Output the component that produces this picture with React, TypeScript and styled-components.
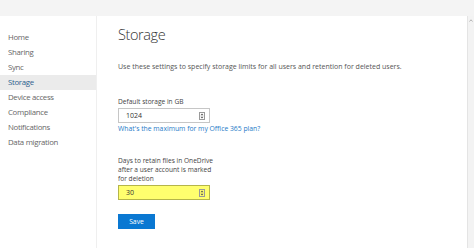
import styled, { createGlobalStyle } from 'styled-components';

const GlobalStyle = createGlobalStyle`
  html, body {
    margin: 0;
    padding: 0;
    background: #ffffff;
  }
  body {
    font-family: "Open Sans", "Noto Sans", sans-serif;
    color: #333333;
  }
`;

const navItems = [
  'Home',
  'Sharing',
  'Sync',
  'Storage',
  'Device access',
  'Compliance',
  'Notifications',
  'Data migration',
];

const Page = styled.div`
  width: 474px;
  height: 248px;
  display: flex;
  flex-direction: column;
  overflow: hidden;
`;

const TopBar = styled.div`
  height: 16px;
  flex: none;
  background: #f4f4f4;
`;

const Body = styled.div`
  flex: 1;
  display: flex;
`;

const Nav = styled.nav`
  width: 96px;
  flex: none;
  border-right: 1px solid #efefef;
  padding-top: 14px;
  display: flex;
  flex-direction: column;
`;

const NavItem = styled.div<{ $active?: boolean }>`
  height: 15px;
  line-height: 15px;
  padding-left: 8px;
  font-size: 7.8px;
  letter-spacing: -0.3px;
  color: ${(p) => (p.$active ? '#2b5f8e' : '#666666')};
  background: ${(p) => (p.$active ? '#ebebeb' : 'transparent')};
`;

const Main = styled.main`
  flex: 1;
  padding: 9px 0 0 21px;
  display: flex;
  flex-direction: column;
  align-items: flex-start;
`;

const Title = styled.h1`
  margin: 0;
  font-size: 14.5px;
  font-weight: 300;
  letter-spacing: -0.4px;
  color: #333333;
  line-height: 20px;
`;

const Description = styled.p`
  margin: 17px 0 0;
  font-size: 7px;
  line-height: 10px;
  color: #555555;
`;

const Field = styled.div<{ $gap: number }>`
  margin-top: ${(p) => p.$gap}px;
  display: flex;
  flex-direction: column;
  align-items: flex-start;
`;

const Label = styled.label`
  font-size: 6.6px;
  line-height: 9px;
  color: #444444;
  width: 100px;
  margin-bottom: 2px;
`;

const InputBox = styled.div<{ $highlight?: boolean }>`
  box-sizing: border-box;
  width: 92px;
  height: 15px;
  display: flex;
  align-items: center;
  justify-content: space-between;
  padding: 0 4px 0 7px;
  border: 1px solid ${(p) => (p.$highlight ? '#b5b54a' : '#c6c6c6')};
  background: ${(p) => (p.$highlight ? '#ffff6e' : '#ffffff')};
  font-size: 7px;
  color: #333333;
`;

const Spinner = styled.span`
  display: flex;
  flex-direction: column;
  align-items: center;
  justify-content: center;
  width: 6px;
  height: 8px;
  border: 1px solid #9a9a9a;
  box-sizing: border-box;
`;

const HelpLink = styled.a`
  margin-top: 1px;
  font-size: 6.8px;
  line-height: 9px;
  color: #1e7bc8;
  text-decoration: none;
`;

const SaveButton = styled.button`
  margin-top: 14px;
  width: 37px;
  height: 15px;
  border: none;
  padding: 0;
  background: #0a78d2;
  color: #ffffff;
  font-family: inherit;
  font-size: 6.8px;
`;

const Scrollbar = styled.div`
  width: 6px;
  flex: none;
  background: #f3f3f3;
  border-left: 1px solid #e4e4e4;
  display: flex;
  justify-content: center;
  padding-top: 3px;
`;

function SpinIcon() {
  return (
    <Spinner>
      <svg width="4" height="6" viewBox="0 0 4 6">
        <path d="M2 0.5 L3.5 2.3 H0.5 Z M2 5.5 L3.5 3.7 H0.5 Z" fill="#555" />
      </svg>
    </Spinner>
  );
}

export default function App() {
  return (
    <>
      <GlobalStyle />
      <Page>
        <TopBar />
        <Body>
          <Nav>
            {navItems.map((item) => (
              <NavItem key={item} $active={item === 'Storage'}>
                {item}
              </NavItem>
            ))}
          </Nav>
          <Main>
            <Title>Storage</Title>
            <Description>
              Use these settings to specify storage limits for all users and retention for deleted users.
            </Description>
            <Field $gap={25}>
              <Label>Default storage in GB</Label>
              <InputBox>
                <span>1024</span>
                <SpinIcon />
              </InputBox>
              <HelpLink href="#">What's the maximum for my Office 365 plan?</HelpLink>
            </Field>
            <Field $gap={23}>
              <Label>Days to retain files in OneDrive after a user account is marked for deletion</Label>
              <InputBox $highlight>
                <span>30</span>
                <SpinIcon />
              </InputBox>
            </Field>
            <SaveButton>Save</SaveButton>
          </Main>
          <Scrollbar>
            <svg width="4" height="3" viewBox="0 0 4 3">
              <path d="M0.5 2.5 L2 0.8 L3.5 2.5" stroke="#999" strokeWidth="0.7" fill="none" />
            </svg>
          </Scrollbar>
        </Body>
      </Page>
    </>
  );
}
